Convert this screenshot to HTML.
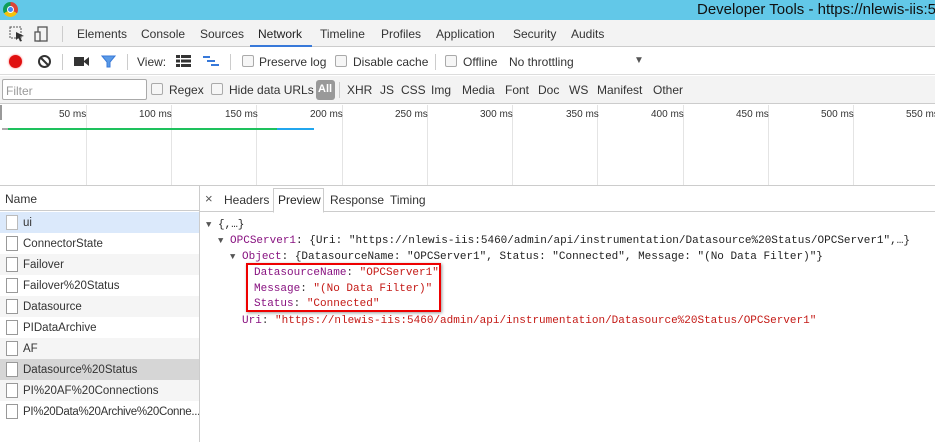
<!DOCTYPE html>
<html><head><style>
*{margin:0;padding:0;box-sizing:border-box}
body{width:935px;height:442px;overflow:hidden;background:#fff;font-family:"Liberation Sans",sans-serif;font-size:12px;color:#333;position:relative}
.abs{position:absolute;white-space:nowrap}
.cb{position:absolute;width:12px;height:12px;border:1px solid #aaa;border-radius:2px;background:#f6f6f6}
.mono{font-family:"Liberation Mono",monospace;font-size:11px}
.p{color:#881280}.s{color:#c41a16}.k{color:#222}
.row{position:absolute;left:0;width:199px;height:21px;overflow:hidden}
.fi{position:absolute;left:6px;top:3px;width:12px;height:15px;border:1px solid #999;background:#fff}
.rt{position:absolute;left:23px;top:4px;white-space:nowrap;font-size:11.5px;line-height:14px}
</style></head><body>
<div class="abs" style="left:0;top:0;width:935px;height:20px;background:#62c8e8"></div>
<div class="abs" style="left:3px;top:2px;width:15px;height:15px;border-radius:50%;background:conic-gradient(#db4437 0 120deg,#f4c20d 120deg 240deg,#0f9d58 240deg 360deg)"></div>
<div class="abs" style="left:7px;top:6px;width:7px;height:7px;border-radius:50%;background:#4285f4;border:1px solid #fff"></div>
<div class="abs" style="left:697px;top:1px;font-size:15px;color:#111">Developer Tools - https://nlewis-iis:5</div>
<div class="abs" style="left:0;top:20px;width:935px;height:27px;background:#f3f3f3;border-bottom:1px solid #ccc"></div>
<svg class="abs" style="left:9px;top:26px" width="40" height="16"><rect x="1" y="1" width="11" height="11" fill="none" stroke="#555" stroke-dasharray="2 1"/><path d="M7 6 L15 10 L11 11 L13 15 L11 15.5 L9.5 12 L7 14Z" fill="#333"/><rect x="29" y="1" width="9" height="14" fill="none" stroke="#555" stroke-width="1.3"/><rect x="26" y="6" width="5" height="9" fill="#f3f3f3" stroke="#555" stroke-width="1.3"/></svg>
<div class="abs" style="left:62px;top:26px;width:1px;height:16px;background:#ccc"></div>
<div class="abs" style="left:77px;top:27px;color:#333">Elements</div>
<div class="abs" style="left:141px;top:27px">Console</div>
<div class="abs" style="left:200px;top:27px">Sources</div>
<div class="abs" style="left:258px;top:27px;color:#222">Network</div>
<div class="abs" style="left:250px;top:45px;width:62px;height:2px;background:#3879d9"></div>
<div class="abs" style="left:320px;top:27px">Timeline</div>
<div class="abs" style="left:381px;top:27px">Profiles</div>
<div class="abs" style="left:436px;top:27px">Application</div>
<div class="abs" style="left:513px;top:27px">Security</div>
<div class="abs" style="left:571px;top:27px">Audits</div>
<div class="abs" style="left:0;top:48px;width:935px;height:27px;background:#fff;border-bottom:1px solid #ddd"></div>
<div class="abs" style="left:9px;top:55px;width:13px;height:13px;border-radius:50%;background:#e01010;box-shadow:0 0 2px #f66"></div>
<svg class="abs" style="left:37px;top:54px" width="15" height="15"><circle cx="7.5" cy="7.5" r="5.5" fill="none" stroke="#333" stroke-width="2"/><path d="M3.5 3.5L11.5 11.5" stroke="#333" stroke-width="2"/></svg>
<div class="abs" style="left:62px;top:54px;width:1px;height:16px;background:#ccc"></div>
<svg class="abs" style="left:74px;top:56px" width="16" height="11"><rect x="0" y="1" width="10" height="9" fill="#333"/><path d="M10 5L15 1V10L10 6Z" fill="#333"/></svg>
<svg class="abs" style="left:101px;top:55px" width="15" height="13"><path d="M1 1H14L9 7V12H6V7Z" fill="#5a9ae6" stroke="#3879d9"/></svg>
<div class="abs" style="left:127px;top:54px;width:1px;height:16px;background:#ccc"></div>
<div class="abs" style="left:137px;top:55px">View:</div>
<svg class="abs" style="left:176px;top:55px" width="15" height="12"><rect x="0" y="0" width="4" height="3" fill="#333"/><rect x="5" y="0" width="10" height="3" fill="#333"/><rect x="0" y="4.5" width="4" height="3" fill="#333"/><rect x="5" y="4.5" width="10" height="3" fill="#333"/><rect x="0" y="9" width="4" height="3" fill="#333"/><rect x="5" y="9" width="10" height="3" fill="#333"/></svg>
<svg class="abs" style="left:203px;top:55px" width="18" height="13"><rect x="0" y="1" width="7" height="2" fill="#3879d9"/><rect x="4" y="5" width="8" height="2" fill="#3879d9"/><rect x="8" y="9" width="8" height="2" fill="#3879d9"/></svg>
<div class="abs" style="left:230px;top:54px;width:1px;height:16px;background:#ccc"></div>
<div class="cb" style="left:242px;top:55px"></div><div class="abs" style="left:259px;top:55px">Preserve log</div>
<div class="cb" style="left:335px;top:55px"></div><div class="abs" style="left:353px;top:55px">Disable cache</div>
<div class="abs" style="left:435px;top:54px;width:1px;height:16px;background:#ccc"></div>
<div class="cb" style="left:445px;top:55px"></div><div class="abs" style="left:463px;top:55px">Offline</div>
<div class="abs" style="left:509px;top:55px">No throttling</div>
<div class="abs" style="left:634px;top:55px;font-size:10px;color:#555">▼</div>
<div class="abs" style="left:0;top:76px;width:935px;height:28px;background:#f3f3f3;border-bottom:1px solid #ccc"></div>
<div class="abs" style="left:2px;top:79px;width:145px;height:21px;background:#fff;border:1px solid #aaa;border-radius:2px"></div>
<div class="abs" style="left:6px;top:84px;color:#999">Filter</div>
<div class="cb" style="left:151px;top:83px"></div><div class="abs" style="left:169px;top:83px">Regex</div>
<div class="cb" style="left:211px;top:83px"></div><div class="abs" style="left:229px;top:83px">Hide data URLs</div>
<div class="abs" style="left:316px;top:80px;width:19px;height:20px;background:#999;border-radius:3px;color:#fff;font-weight:bold;padding:3px 0 0 2px;font-size:11px">All</div>
<div class="abs" style="left:339px;top:82px;width:1px;height:16px;background:#ccc"></div>
<div class="abs" style="left:347px;top:83px">XHR</div><div class="abs" style="left:380px;top:83px">JS</div><div class="abs" style="left:401px;top:83px">CSS</div><div class="abs" style="left:431px;top:83px">Img</div><div class="abs" style="left:462px;top:83px">Media</div><div class="abs" style="left:505px;top:83px">Font</div><div class="abs" style="left:538px;top:83px">Doc</div><div class="abs" style="left:569px;top:83px">WS</div><div class="abs" style="left:597px;top:83px">Manifest</div><div class="abs" style="left:653px;top:83px">Other</div>
<div class="abs" style="left:0;top:105px;width:935px;height:81px;background:#fff;border-bottom:1px solid #ccc"></div>
<div class="abs" style="left:86px;top:105px;width:1px;height:80px;background:#e4e4e4"></div>
<div class="abs" style="left:171px;top:105px;width:1px;height:80px;background:#e4e4e4"></div>
<div class="abs" style="left:256px;top:105px;width:1px;height:80px;background:#e4e4e4"></div>
<div class="abs" style="left:342px;top:105px;width:1px;height:80px;background:#e4e4e4"></div>
<div class="abs" style="left:427px;top:105px;width:1px;height:80px;background:#e4e4e4"></div>
<div class="abs" style="left:512px;top:105px;width:1px;height:80px;background:#e4e4e4"></div>
<div class="abs" style="left:597px;top:105px;width:1px;height:80px;background:#e4e4e4"></div>
<div class="abs" style="left:683px;top:105px;width:1px;height:80px;background:#e4e4e4"></div>
<div class="abs" style="left:768px;top:105px;width:1px;height:80px;background:#e4e4e4"></div>
<div class="abs" style="left:853px;top:105px;width:1px;height:80px;background:#e4e4e4"></div>
<div class="abs" style="left:0;top:105px;width:2px;height:15px;background:#999"></div>
<div class="abs" style="font-size:10px;top:109px;left:59px">50 ms</div>
<div class="abs" style="font-size:10px;top:109px;left:139px">100 ms</div>
<div class="abs" style="font-size:10px;top:109px;left:225px">150 ms</div>
<div class="abs" style="font-size:10px;top:109px;left:310px">200 ms</div>
<div class="abs" style="font-size:10px;top:109px;left:395px">250 ms</div>
<div class="abs" style="font-size:10px;top:109px;left:480px">300 ms</div>
<div class="abs" style="font-size:10px;top:109px;left:566px">350 ms</div>
<div class="abs" style="font-size:10px;top:109px;left:651px">400 ms</div>
<div class="abs" style="font-size:10px;top:109px;left:736px">450 ms</div>
<div class="abs" style="font-size:10px;top:109px;left:821px">500 ms</div>
<div class="abs" style="font-size:10px;top:109px;left:906px">550 ms</div>
<div class="abs" style="left:2px;top:128px;width:6px;height:2px;background:#aaa"></div>
<div class="abs" style="left:8px;top:128px;width:269px;height:2px;background:#1ec15d"></div>
<div class="abs" style="left:277px;top:128px;width:37px;height:2px;background:#21a6ee"></div>
<div class="abs" style="left:199px;top:186px;width:1px;height:256px;background:#ccc"></div>
<div class="abs" style="left:0;top:186px;width:199px;height:25px;border-bottom:1px solid #ccc"></div>
<div class="abs" style="left:5px;top:192px">Name</div>
<div class="row" style="top:212px;background:#dbe9fb"><div class="fi" style="border-color:#bbb"></div><div class="rt">ui</div></div>
<div class="row" style="top:233px"><div class="fi"></div><div class="rt">ConnectorState</div></div>
<div class="row" style="top:254px;background:#f5f5f5"><div class="fi"></div><div class="rt">Failover</div></div>
<div class="row" style="top:275px"><div class="fi"></div><div class="rt">Failover%20Status</div></div>
<div class="row" style="top:296px;background:#f5f5f5"><div class="fi"></div><div class="rt">Datasource</div></div>
<div class="row" style="top:317px"><div class="fi"></div><div class="rt">PIDataArchive</div></div>
<div class="row" style="top:338px;background:#f5f5f5"><div class="fi"></div><div class="rt">AF</div></div>
<div class="row" style="top:359px;background:#d6d6d6"><div class="fi"></div><div class="rt">Datasource%20Status</div></div>
<div class="row" style="top:380px;background:#f5f5f5"><div class="fi"></div><div class="rt">PI%20AF%20Connections</div></div>
<div class="row" style="top:401px"><div class="fi"></div><div class="rt" style="letter-spacing:-0.3px">PI%20Data%20Archive%20Conne...</div></div>
<div class="abs" style="left:200px;top:186px;width:735px;height:26px;border-bottom:1px solid #ccc"></div>
<div class="abs" style="left:205px;top:191px;font-size:13px;color:#555">×</div>
<div class="abs" style="left:224px;top:193px">Headers</div>
<div class="abs" style="left:273px;top:188px;width:51px;height:25px;border:1px solid #ccc;border-bottom:1px solid #fff;background:#fff"></div>
<div class="abs" style="left:278px;top:193px;color:#222">Preview</div>
<div class="abs" style="left:330px;top:193px">Response</div>
<div class="abs" style="left:390px;top:193px">Timing</div>
<div class="abs mono k" style="left:206px;top:219px"><span style="font-size:9px;color:#555">▼</span> {,…}</div>
<div class="abs mono k" style="left:218px;top:235px"><span style="font-size:9px;color:#555">▼</span> <span class="p">OPCServer1</span>: {Uri: "https://nlewis-iis:5460/admin/api/instrumentation/Datasource%20Status/OPCServer1",…}</div>
<div class="abs mono k" style="left:230px;top:251px"><span style="font-size:9px;color:#555">▼</span> <span class="p">Object</span>: {DatasourceName: "OPCServer1", Status: "Connected", Message: "(No Data Filter)"}</div>
<div class="abs" style="left:246px;top:263px;width:195px;height:49px;border:2px solid #e00;box-shadow:1px 1px 3px #999"></div>
<div class="abs mono" style="left:254px;top:267px"><span class="p">DatasourceName</span>: <span class="s">"OPCServer1"</span></div>
<div class="abs mono" style="left:254px;top:283px"><span class="p">Message</span>: <span class="s">"(No Data Filter)"</span></div>
<div class="abs mono" style="left:254px;top:298px"><span class="p">Status</span>: <span class="s">"Connected"</span></div>
<div class="abs mono" style="left:242px;top:315px"><span class="p">Uri</span>: <span class="s">"https://nlewis-iis:5460/admin/api/instrumentation/Datasource%20Status/OPCServer1"</span></div>
</body></html>
